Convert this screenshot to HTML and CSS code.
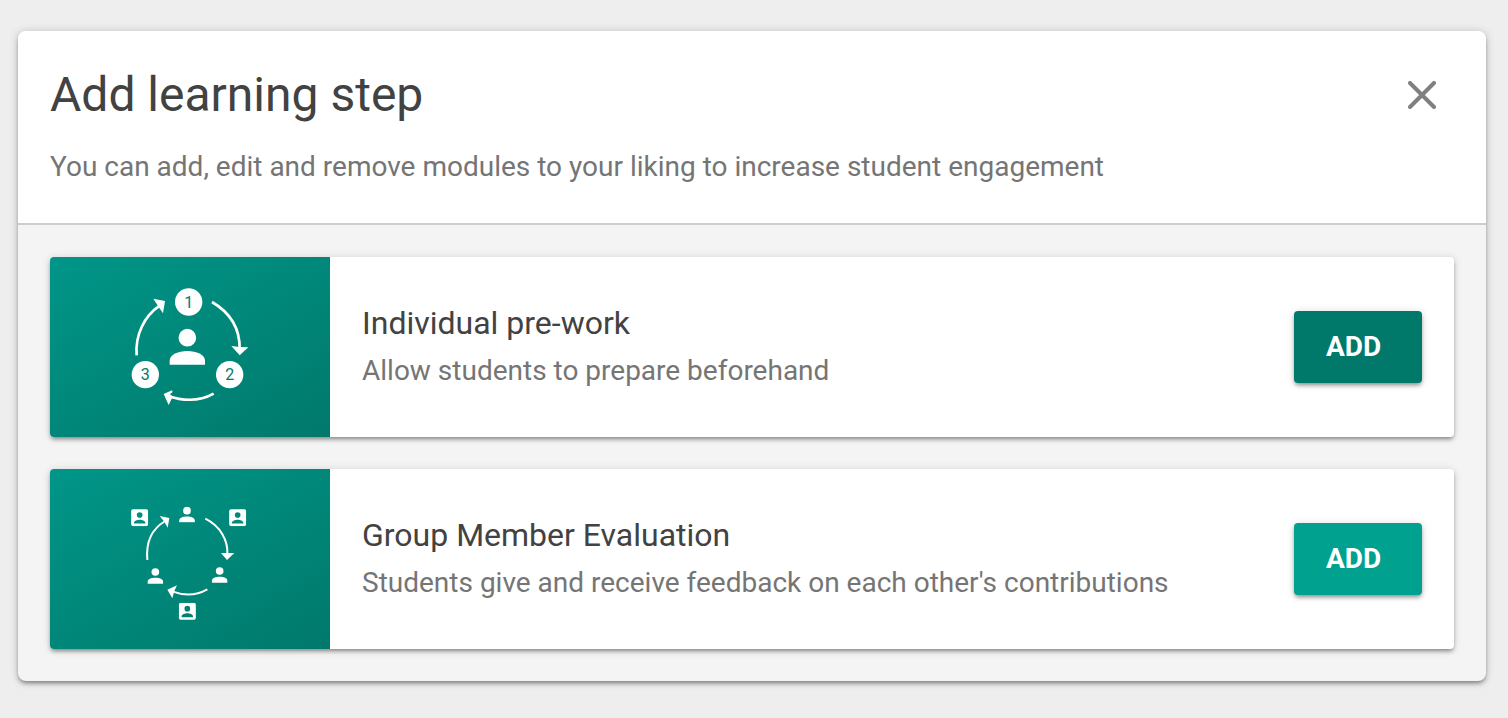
FILE: index.html
```
<!DOCTYPE html>
<html lang="en">
<head>
  <meta charset="utf-8">
  <meta name="viewport" content="width=device-width">
  <link rel="stylesheet" href="styles.css">
  <title>Add learning step</title>
</head>
<body>
  <!-- shared shapes -->
  <svg class="defs" aria-hidden="true">
    <defs>
      <symbol id="person" viewBox="0 0 48 48">
        <circle cx="24" cy="12" r="11.5"/>
        <path d="M0.5 47V42C0.5 33.500 12 29.500 24 29.500S47.500 33.500 47.500 42V47Z"/>
      </symbol>
      <symbol id="badge" viewBox="0 0 52 52">
        <path fill-rule="evenodd" d="M6 0.500H46Q51.500 0.500 51.500 6V46Q51.500 51.500 46 51.500H6Q0.500 51.500 0.500 46V6Q0.500 0.500 6 0.500ZM26 9.500A8.500 8.500 0 1 0 26 26.500A8.500 8.500 0 1 0 26 9.500ZM9 43.500H43V41C43 35 33 32 26 32S9 35 9 41Z"/>
      </symbol>
    </defs>
  </svg>

  <main class="dialog">
    <header class="dialog-header">
      <div class="title-row">
        <h1>Add learning step</h1>
        <button type="button" class="close" aria-label="Close">
          <svg width="28" height="28" viewBox="0 0 28 28" aria-hidden="true">
            <path d="M2 2L26 26M26 2L2 26"/>
          </svg>
        </button>
      </div>
      <p>You can add, edit and remove modules to your liking to increase student engagement</p>
    </header>

    <div class="dialog-body">
      <section class="card">
        <div class="card-image">
          <svg viewBox="0 0 840 540" aria-hidden="true">
            <g transform="translate(180 39)">
              <g class="arc thick">
                <path d="M306 96C361 128 390 178 389 238"/>
                <path d="M80 256C75 195 103 138 149 107"/>
                <path d="M311 371C268 395 224 395 172 377"/>
              </g>
              <path d="M364 228L390 231L415 232L389 256Z"/>
              <path d="M130 86L165 93L159 130L146 111Z"/>
              <path d="M161 372L186 361L188 366L180 372L188 380L176 405Z"/>
              <circle cx="236" cy="96" r="41"/>
              <circle cx="359" cy="314" r="41"/>
              <circle cx="106" cy="314" r="41"/>
              <circle cx="232" cy="203" r="26.5"/>
              <path d="M179 284V272C179 254 205 243 232 243S285 254 285 272V284Z"/>
              <g class="digits">
                <text x="236" y="113">1</text>
                <text x="359" y="331">2</text>
                <text x="106" y="331">3</text>
              </g>
            </g>
          </svg>
        </div>
        <div class="card-text">
          <h2>Individual pre-work</h2>
          <p>Allow students to prepare beforehand</p>
        </div>
        <button type="button" class="add active">ADD</button>
      </section>

      <section class="card">
        <div class="card-image">
          <svg viewBox="0 0 840 540" aria-hidden="true">
            <g transform="translate(180 63)">
              <g class="arc">
                <path d="M286 86C330 108 355 150 352 194"/>
                <path d="M112 210C107 155 128 115 166 93"/>
                <path d="M292 298C258 317 224 318 186 304"/>
              </g>
              <path d="M333 189H373L351 210Z"/>
              <path d="M149 78L178 84L173 113L163 95Z"/>
              <path d="M172 299L201 286L193 303L187 325Z"/>
              <use href="#person" x="207" y="50" width="48" height="48"/>
              <use href="#person" x="112" y="234" width="48" height="48"/>
              <use href="#person" x="305" y="231" width="48" height="48"/>
              <use href="#badge" x="63" y="57" width="52" height="52"/>
              <use href="#badge" x="357" y="57" width="52" height="52"/>
              <use href="#badge" x="206" y="338" width="52" height="52"/>
            </g>
          </svg>
        </div>
        <div class="card-text">
          <h2>Group Member Evaluation</h2>
          <p>Students give and receive feedback on each other's contributions</p>
        </div>
        <button type="button" class="add">ADD</button>
      </section>
    </div>
  </main>
</body>
</html>
```
FILE: styles.css
```
* {
  box-sizing: border-box;
}
body {
  margin: 0;
  padding: 31px 22px 37px 18px;
  background-color: #eeeeee;
  color: #424242;
  font-family: Roboto, sans-serif;
}
.defs {
  position: absolute;
  width: 0;
  height: 0;
}
h1, h2, p {
  margin: 0;
  font-weight: 400;
}
p {
  color: #757575;
  font-size: 28px;
  line-height: 48px;
}
.dialog {
  border-radius: 8px;
  background-color: #f4f4f4;
  box-shadow: 0 3px 4px -1px rgba(0, 0, 0, 0.4), 0 1px 10px rgba(0, 0, 0, 0.2);
}
.dialog-header {
  padding: 32px;
  border-bottom: 2px solid #cecece;
  border-radius: 8px 8px 0 0;
  background-color: #ffffff;
}
.title-row {
  display: flex;
  align-items: center;
  justify-content: space-between;
  margin-bottom: 16px;
}
h1 {
  font-size: 48px;
  line-height: 64px;
}
.close {
  display: flex;
  padding: 18px;
  border: 0;
  background: none;
}
.close path {
  fill: none;
  stroke: #808080;
  stroke-width: 4;
  stroke-linecap: round;
}
.dialog-body {
  display: flex;
  flex-direction: column;
  gap: 32px;
  padding: 32px;
}
.card {
  display: flex;
  align-items: center;
  padding-right: 32px;
  border-radius: 4px;
  background-color: #ffffff;
  box-shadow: 0 3px 4px -1px rgba(0, 0, 0, 0.4), 0 1px 8px rgba(0, 0, 0, 0.15);
}
.card-image {
  flex: none;
  width: 280px;
  border-radius: 4px 0 0 4px;
  background: linear-gradient(150deg, #009688, #00796b);
}
.card-image svg {
  display: block;
  width: 100%;
  fill: #ffffff;
}
.arc {
  fill: none;
  stroke: #ffffff;
  stroke-width: 6;
}
.thick {
  stroke-width: 8;
}
.digits {
  fill: #00796b;
  font-size: 48px;
  text-anchor: middle;
}
.card-text {
  flex: 1;
  padding: 0 32px;
}
h2 {
  font-size: 32px;
  line-height: 48px;
}
.add {
  min-width: 128px;
  height: 72px;
  padding: 0 32px 2px;
  border: 0;
  border-radius: 4px;
  background-color: #00a18f;
  box-shadow: 0 3px 4px -1px rgba(0, 0, 0, 0.4), 0 1px 8px rgba(0, 0, 0, 0.15);
  color: #ffffff;
  font-family: inherit;
  font-size: 28px;
  font-weight: 700;
  text-align: left;
}
.add.active {
  background-color: #00796b;
}
```
